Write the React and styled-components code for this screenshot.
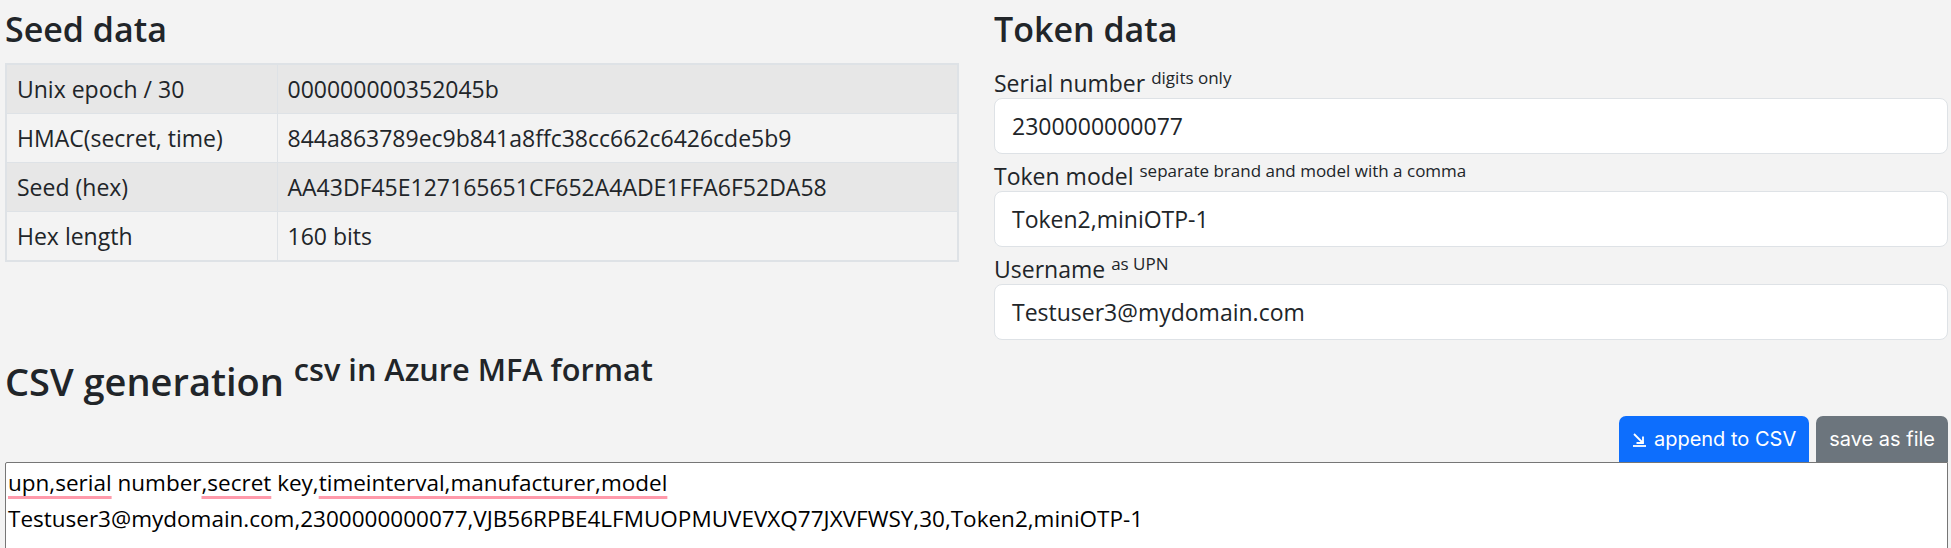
import React from "react";
import styled, { createGlobalStyle } from "styled-components";

const GlobalStyle = createGlobalStyle`
  html, body {
    margin: 0;
    padding: 0;
    background: #f3f3f3;
  }
  body {
    font-family: "Open Sans", "Noto Sans", sans-serif;
    font-size: 23px;
    color: #212529;
  }
  * { box-sizing: border-box; }
`;

const Page = styled.div`
  padding: 0 3px 0 5px;
  height: 548px;
  overflow: hidden;
`;

const TopRow = styled.div`
  display: flex;
  gap: 35px;
`;

const Column = styled.div`
  flex: 1;
  min-width: 0;
`;

const Heading = styled.h3`
  margin: 8px 0 13px;
  font-size: 34px;
  font-weight: 600;
  line-height: 42px;
`;

const Table = styled.table`
  width: 100%;
  border-collapse: collapse;
  border: 2px solid #dee2e6;
`;

const Row = styled.tr`
  background: ${(p) => (p.$striped ? "#e7e7e7" : "transparent")};
`;

const Cell = styled.td`
  padding: 9px 10px;
  line-height: 30px;
  border: 1px solid #dee2e6;
  width: ${(p) => p.$width || "auto"};
`;

const FieldList = styled.div`
  padding-top: 5px;
`;

const Field = styled.div`
  margin-bottom: 7px;
`;

const Label = styled.label`
  display: block;
  line-height: 30px;
  height: 30px;

  sup {
    font-size: 17px;
    vertical-align: 0;
    position: relative;
    top: -8px;
  }
`;

const Input = styled.div`
  height: 56px;
  padding: 0 17px;
  display: flex;
  align-items: center;
  background: #fff;
  border: 1px solid #dee2e6;
  border-radius: 8px;
`;

const CsvHeading = styled.h2`
  margin: 10px 0 0;
  font-size: 38px;
  font-weight: 600;
  line-height: 48px;

  sup {
    font-size: 30.7px;
    vertical-align: 0;
    position: relative;
    top: -15px;
  }
`;

const Toolbar = styled.div`
  display: flex;
  justify-content: flex-end;
  gap: 7px;
  margin-top: 8px;
`;

const Button = styled.button`
  height: 46px;
  padding: 0 13px;
  border: none;
  border-radius: 7px 7px 0 0;
  background: ${(p) => (p.$variant === "primary" ? "#0d6efd" : "#6c757d")};
  color: #fff;
  font-family: Inter, "Noto Sans", sans-serif;
  font-size: 20px;
  display: flex;
  align-items: center;
  gap: 7px;
`;

const CsvBox = styled.div`
  height: 130px;
  padding: 2px;
  background: #fff;
  color: #000;
  border: 1px solid #767676;
  border-radius: 2px 0 0 0;
  font-size: 22.5px;
  line-height: 36px;
  white-space: pre;
`;

const Misspelled = styled.span`
  text-decoration: underline;
  text-decoration-color: #ff9aab;
  text-decoration-thickness: 3px;
  text-underline-offset: 5px;
`;

const CornerArrow = () => (
  <svg width="15" height="15" viewBox="0 0 15 15" fill="none" stroke="#fff" strokeWidth="1.8">
    <path d="M2 2 L11 11" />
    <path d="M11 4.5 V11 H4.5" />
    <path d="M1 14 H14" />
  </svg>
);

const seed = [
  ["Unix epoch / 30", "000000000352045b"],
  ["HMAC(secret, time)", "844a863789ec9b841a8ffc38cc662c6426cde5b9"],
  ["Seed (hex)", "AA43DF45E127165651CF652A4ADE1FFA6F52DA58"],
  ["Hex length", "160 bits"],
];

const fields = [
  ["Serial number", "digits only", "2300000000077"],
  ["Token model", "separate brand and model with a comma", "Token2,miniOTP-1"],
  ["Username", "as UPN", "Testuser3@mydomain.com"],
];

export default function App() {
  return (
    <Page>
      <GlobalStyle />
      <TopRow>
        <Column>
          <Heading>Seed data</Heading>
          <Table>
            <tbody>
              {seed.map(([k, v], i) => (
                <Row key={k} $striped={i % 2 === 0}>
                  <Cell $width="271px">{k}</Cell>
                  <Cell>{v}</Cell>
                </Row>
              ))}
            </tbody>
          </Table>
        </Column>
        <Column>
          <Heading>Token data</Heading>
          <FieldList>
            {fields.map(([label, hint, value]) => (
              <Field key={label}>
                <Label>
                  {label} <sup>{hint}</sup>
                </Label>
                <Input>{value}</Input>
              </Field>
            ))}
          </FieldList>
        </Column>
      </TopRow>
      <CsvHeading>
        CSV generation <sup>csv in Azure MFA format</sup>
      </CsvHeading>
      <Toolbar>
        <Button $variant="primary">
          <CornerArrow />
          append to CSV
        </Button>
        <Button>save as file</Button>
      </Toolbar>
      <CsvBox>
        <Misspelled>upn,serial</Misspelled> number<Misspelled>,secret</Misspelled> key,
        <Misspelled>timeinterval,manufacturer,model</Misspelled>
        {"\n"}Testuser3@mydomain.com,2300000000077,VJB56RPBE4LFMUOPMUVEVXQ77JXVFWSY,30,Token2,miniOTP-1
      </CsvBox>
    </Page>
  );
}
